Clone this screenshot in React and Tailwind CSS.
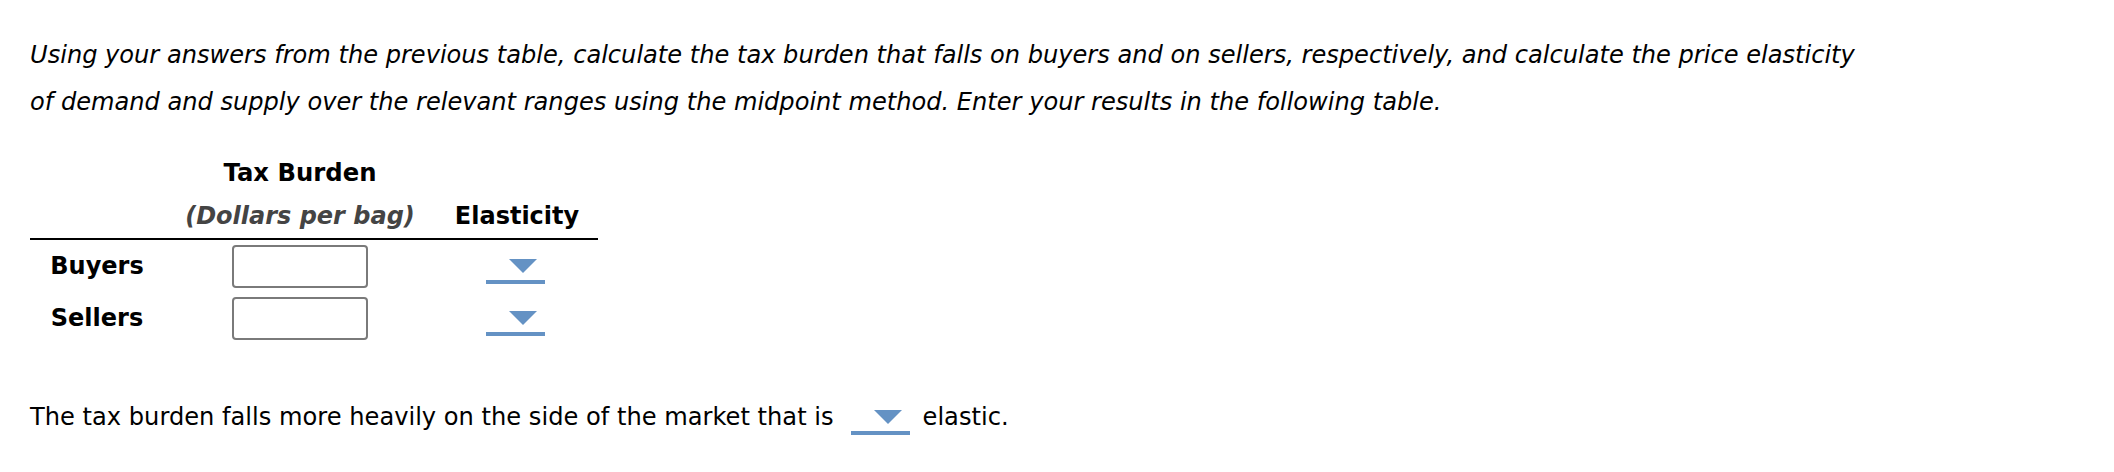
import React from "react";

const blue = "#6492c4";

const Dropdown = ({ className = "" }) => (
  <div
    className={`w-[59px] h-[25px] flex justify-end items-start pr-[8px] border-b-4 border-[#6492c4] ${className}`}
  >
    <svg width="28" height="14" viewBox="0 0 28 14">
      <path d="M0 0 L28 0 L14 14 Z" fill={blue} />
    </svg>
  </div>
);

const TextBox = () => (
  <div className="w-[136px] h-[43px] rounded-[4px] border-2 border-[#7a7a7a] bg-white" />
);

const rows = ["Buyers", "Sellers"];

export default function App() {
  return (
    <div className="w-[2114px] h-[472px] bg-white text-black px-[30px] pt-[32px] font-['DejaVu_Sans',Verdana,sans-serif]">
      <p className="italic text-[24.1px] leading-[47px] whitespace-nowrap">
        Using your answers from the previous table, calculate the tax burden that falls on buyers and on sellers,
        respectively, and calculate the price elasticity
        <br />
        of demand and supply over the relevant ranges using the midpoint method. Enter your results in the following
        table.
      </p>

      <div className="mt-[27px] w-[568px]">
        <div className="flex h-[40px] items-center font-bold text-[24.3px]">
          <div className="w-[134px]" />
          <div className="w-[272px] text-center">Tax Burden</div>
          <div className="w-[162px]" />
        </div>
        <div className="flex h-[47px] items-center text-[24px] border-b-2 border-black">
          <div className="w-[134px]" />
          <div className="w-[272px] text-center font-bold italic text-[#444]">(Dollars per bag)</div>
          <div className="w-[162px] text-center font-bold">Elasticity</div>
        </div>
        {rows.map((r) => (
          <div key={r} className="flex h-[52px] items-center">
            <div className="w-[134px] text-center font-bold text-[24px]">{r}</div>
            <div className="w-[272px] flex justify-center">
              <TextBox />
            </div>
            <div className="w-[162px] h-full flex justify-center items-start pt-[19px] pr-[4px]">
              <Dropdown />
            </div>
          </div>
        ))}
      </div>

      <div className="mt-[53px] flex items-start h-[40px] text-[24.15px] leading-[40px] whitespace-nowrap">
        <span>The tax burden falls more heavily on the side of the market that is</span>
        <Dropdown className="mt-[13px] ml-[17px] mr-[13px]" />
        <span>elastic.</span>
      </div>
    </div>
  );
}
